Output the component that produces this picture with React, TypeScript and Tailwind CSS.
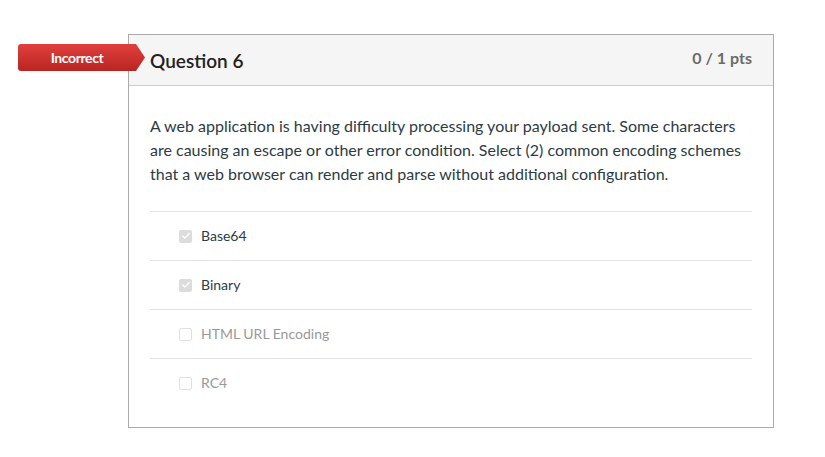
import { Check } from "lucide-react"

const answers = [
  { label: "Base64", checked: true },
  { label: "Binary", checked: true },
  { label: "HTML URL Encoding", checked: false },
  { label: "RC4", checked: false },
]

export default function App() {
  return (
    <div className="min-h-screen bg-white pt-[34px] pl-[128px]" style={{ fontFamily: "Lato, 'Open Sans', sans-serif" }}>
      <div className="relative w-[646px] border border-[#aaaaaa] bg-white">
        {/* incorrect flag */}
        <div className="absolute left-[-111px] top-[9px] flex h-[27px] items-stretch">
          <div className="flex w-[118px] items-center justify-center rounded-l-[3px] bg-gradient-to-b from-[#e0403d] to-[#b82522] text-[14px] font-bold tracking-[-0.4px] text-white">
            Incorrect
          </div>
          <div
            className="h-[27px] w-[9px] bg-gradient-to-b from-[#e0403d] to-[#b82522]"
            style={{ clipPath: "polygon(0 0, 100% 50%, 0 100%)" }}
          />
        </div>

        <div className="flex h-[51px] items-start justify-between border-b border-[#c7cdd1] bg-[#f5f5f5] px-[21px]">
          <div className="pt-[12px] text-[19px] font-semibold text-[#222222]">Question 6</div>
          <div className="pt-[11px] text-[16px] font-bold text-[#6b6b6b]">0 / 1 pts</div>
        </div>

        <div className="px-[21px] pt-[28px] pb-[20px]">
          <p className="text-[16px] leading-[24px] text-[#2d3b45]">
            A web application is having difficulty processing your payload sent. Some characters are causing an escape
            or other error condition. Select (2) common encoding schemes that a web browser can render and parse without
            additional configuration.
          </p>
          <div className="mt-[25px]">
            {answers.map((a) => (
              <div key={a.label} className="flex h-[49px] items-center border-t border-[#e2e2e2] pl-[29px]">
                {a.checked ? (
                  <span className="flex h-[13px] w-[13px] items-center justify-center rounded-[2px] bg-[#dcdcdc]">
                    <Check size={10} strokeWidth={3} className="text-white" />
                  </span>
                ) : (
                  <span className="h-[13px] w-[13px] rounded-[2px] border border-[#e0e0e0] bg-white" />
                )}
                <span
                  className={`ml-[9px] -translate-y-[1px] text-[14px] ${a.checked ? "text-[#2d3b45]" : "text-[#999999]"}`}
                >
                  {a.label}
                </span>
              </div>
            ))}
          </div>
        </div>
      </div>
    </div>
  )
}
